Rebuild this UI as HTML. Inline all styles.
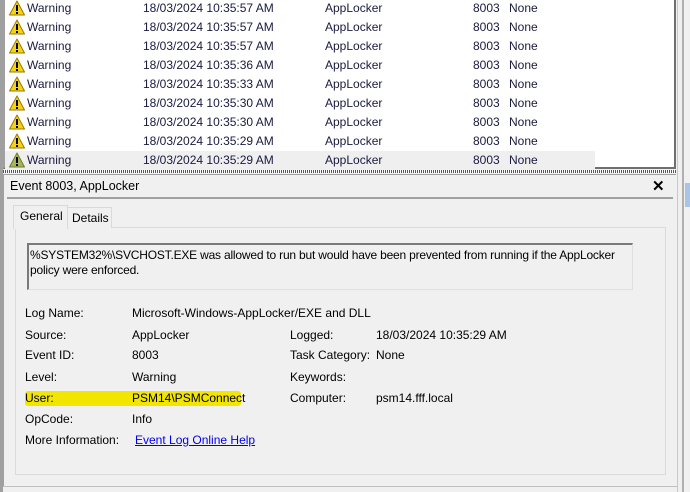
<!DOCTYPE html>
<html><head><style>
*{margin:0;padding:0;box-sizing:border-box}
body{width:690px;height:492px;background:#f0f0f0;position:relative;overflow:hidden;font-family:"Liberation Sans",sans-serif;font-size:12px;color:#000}
.a{position:absolute;white-space:nowrap}
.list{position:absolute;left:3px;top:0;width:673px;height:169px;background:#fff;border-right:2px solid #6f6f6f;border-bottom:2px solid #6f6f6f;border-left:2px solid #a0a0a0}
.row{position:absolute;left:0;height:19px;width:590px;color:#1a1a40;line-height:19px}
.row span{position:absolute}
.hl{background:#efefef}
</style></head><body>
<div class="list">
<svg width="0" height="0" style="position:absolute"><defs>
<g id="w"><path d="M8 1 L15.5 15 L0.5 15 Z" fill="#f5d21a" stroke="#9a7a00" stroke-width="1" stroke-linejoin="round"/><rect x="7" y="5" width="2" height="6" fill="#000"/><rect x="7" y="12" width="2" height="2" fill="#000"/></g>
<g id="g"><path d="M8 1 L15.5 15 L0.5 15 Z" fill="#a8b45c" stroke="#6f7a30" stroke-width="1" stroke-linejoin="round"/><rect x="7" y="5" width="2" height="6" fill="#000"/><rect x="7" y="12" width="2" height="2" fill="#000"/></g>
</defs></svg>
<div class="row" style="top:-1px"><svg class="a" style="left:4px;top:1px" width="17" height="16"><use href="#w"/></svg><span style="left:22px">Warning</span><span style="left:138px">18/03/2024 10:35:57 AM</span><span style="left:320px">AppLocker</span><span style="left:468px">8003</span><span style="left:504px">None</span></div>
<div class="row" style="top:18px"><svg class="a" style="left:4px;top:1px" width="17" height="16"><use href="#w"/></svg><span style="left:22px">Warning</span><span style="left:138px">18/03/2024 10:35:57 AM</span><span style="left:320px">AppLocker</span><span style="left:468px">8003</span><span style="left:504px">None</span></div>
<div class="row" style="top:37px"><svg class="a" style="left:4px;top:1px" width="17" height="16"><use href="#w"/></svg><span style="left:22px">Warning</span><span style="left:138px">18/03/2024 10:35:57 AM</span><span style="left:320px">AppLocker</span><span style="left:468px">8003</span><span style="left:504px">None</span></div>
<div class="row" style="top:56px"><svg class="a" style="left:4px;top:1px" width="17" height="16"><use href="#w"/></svg><span style="left:22px">Warning</span><span style="left:138px">18/03/2024 10:35:36 AM</span><span style="left:320px">AppLocker</span><span style="left:468px">8003</span><span style="left:504px">None</span></div>
<div class="row" style="top:75px"><svg class="a" style="left:4px;top:1px" width="17" height="16"><use href="#w"/></svg><span style="left:22px">Warning</span><span style="left:138px">18/03/2024 10:35:33 AM</span><span style="left:320px">AppLocker</span><span style="left:468px">8003</span><span style="left:504px">None</span></div>
<div class="row" style="top:94px"><svg class="a" style="left:4px;top:1px" width="17" height="16"><use href="#w"/></svg><span style="left:22px">Warning</span><span style="left:138px">18/03/2024 10:35:30 AM</span><span style="left:320px">AppLocker</span><span style="left:468px">8003</span><span style="left:504px">None</span></div>
<div class="row" style="top:113px"><svg class="a" style="left:4px;top:1px" width="17" height="16"><use href="#w"/></svg><span style="left:22px">Warning</span><span style="left:138px">18/03/2024 10:35:30 AM</span><span style="left:320px">AppLocker</span><span style="left:468px">8003</span><span style="left:504px">None</span></div>
<div class="row" style="top:132px"><svg class="a" style="left:4px;top:1px" width="17" height="16"><use href="#w"/></svg><span style="left:22px">Warning</span><span style="left:138px">18/03/2024 10:35:29 AM</span><span style="left:320px">AppLocker</span><span style="left:468px">8003</span><span style="left:504px">None</span></div>
<div class="row hl" style="top:151px"><svg class="a" style="left:4px;top:1px" width="17" height="16"><use href="#g"/></svg><span style="left:22px">Warning</span><span style="left:138px">18/03/2024 10:35:29 AM</span><span style="left:320px">AppLocker</span><span style="left:468px">8003</span><span style="left:504px">None</span></div>
</div>
<div class="a" style="left:0;top:0;width:3px;height:492px;background:#a0a0a0"></div>
<div class="a" style="left:3px;top:170px;width:673px;height:3px;background:repeating-linear-gradient(90deg,#555 0 1px,#fff 1px 2px)"></div>
<div class="a" style="left:3px;top:174px;width:673px;height:1px;background:#a0a0a0"></div>
<div class="a" style="left:3px;top:175px;width:1px;height:312px;background:#a0a0a0"></div>
<div class="a" style="left:677px;top:0;width:1px;height:492px;background:#c8c8c8"></div>
<div class="a" style="left:682px;top:0;width:2px;height:492px;background:#b0b0b0"></div>
<div class="a" style="left:685px;top:183px;width:5px;height:24px;background:#a9c4e4"></div>
<div class="a" style="left:10px;top:179px;font-size:12.5px">Event 8003, AppLocker</div>
<div class="a" style="left:652px;top:177px;font-size:15px;font-weight:bold">✕</div>
<div class="a" style="left:7px;top:197px;width:666px;height:2px;background:#a0a0a0"></div>
<div class="a" style="left:15px;top:227px;width:651px;height:248px;border:1px solid #dadada;background:#f0f0f0"></div>
<div class="a" style="left:67px;top:207px;width:45px;height:21px;border:1px solid #d9d9d9;border-bottom:none;background:#f0f0f0;padding:3px 0 0 4px">Details</div>
<div class="a" style="left:13px;top:205px;width:55px;height:24px;border:1px solid #d9d9d9;border-bottom:none;background:#f0f0f0;padding:3px 0 0 6px">General</div>
<div class="a" style="left:27px;top:243px;width:606px;height:47px;border:1px solid #e0e0e0;border-top:2px solid #7a7a7a;border-left:2px solid #7a7a7a;padding:3px 0 0 1px;line-height:15px;letter-spacing:-0.2px;font-size:12px;overflow:hidden">%SYSTEM32%\SVCHOST.EXE was allowed to run but would have been prevented from running if the AppLocker<br>policy were enforced.</div>
<div class="a" style="left:25px;top:391px;width:216px;height:15px;background:#f2e600;border-radius:3px"></div>
<div class="a" style="left:25px;top:306px">Log Name:</div><div class="a" style="left:132px;top:306px">Microsoft-Windows-AppLocker/EXE and DLL</div>
<div class="a" style="left:25px;top:328px">Source:</div><div class="a" style="left:132px;top:328px">AppLocker</div>
<div class="a" style="left:290px;top:328px">Logged:</div><div class="a" style="left:376px;top:328px">18/03/2024 10:35:29 AM</div>
<div class="a" style="left:25px;top:348px">Event ID:</div><div class="a" style="left:132px;top:348px">8003</div>
<div class="a" style="left:290px;top:348px">Task Category:</div><div class="a" style="left:376px;top:348px">None</div>
<div class="a" style="left:25px;top:370px">Level:</div><div class="a" style="left:132px;top:370px">Warning</div>
<div class="a" style="left:290px;top:370px">Keywords:</div>
<div class="a" style="left:25px;top:391px">User:</div><div class="a" style="left:132px;top:391px">PSM14\PSMConnect</div>
<div class="a" style="left:290px;top:391px">Computer:</div><div class="a" style="left:376px;top:391px">psm14.fff.local</div>
<div class="a" style="left:25px;top:412px">OpCode:</div><div class="a" style="left:132px;top:412px">Info</div>
<div class="a" style="left:25px;top:433px">More Information:</div><div class="a" style="left:135px;top:433px;color:#0000ee;text-decoration:underline">Event Log Online Help</div>
<div class="a" style="left:3px;top:486px;width:674px;height:1px;background:#c0c0c0"></div>
</body></html>
